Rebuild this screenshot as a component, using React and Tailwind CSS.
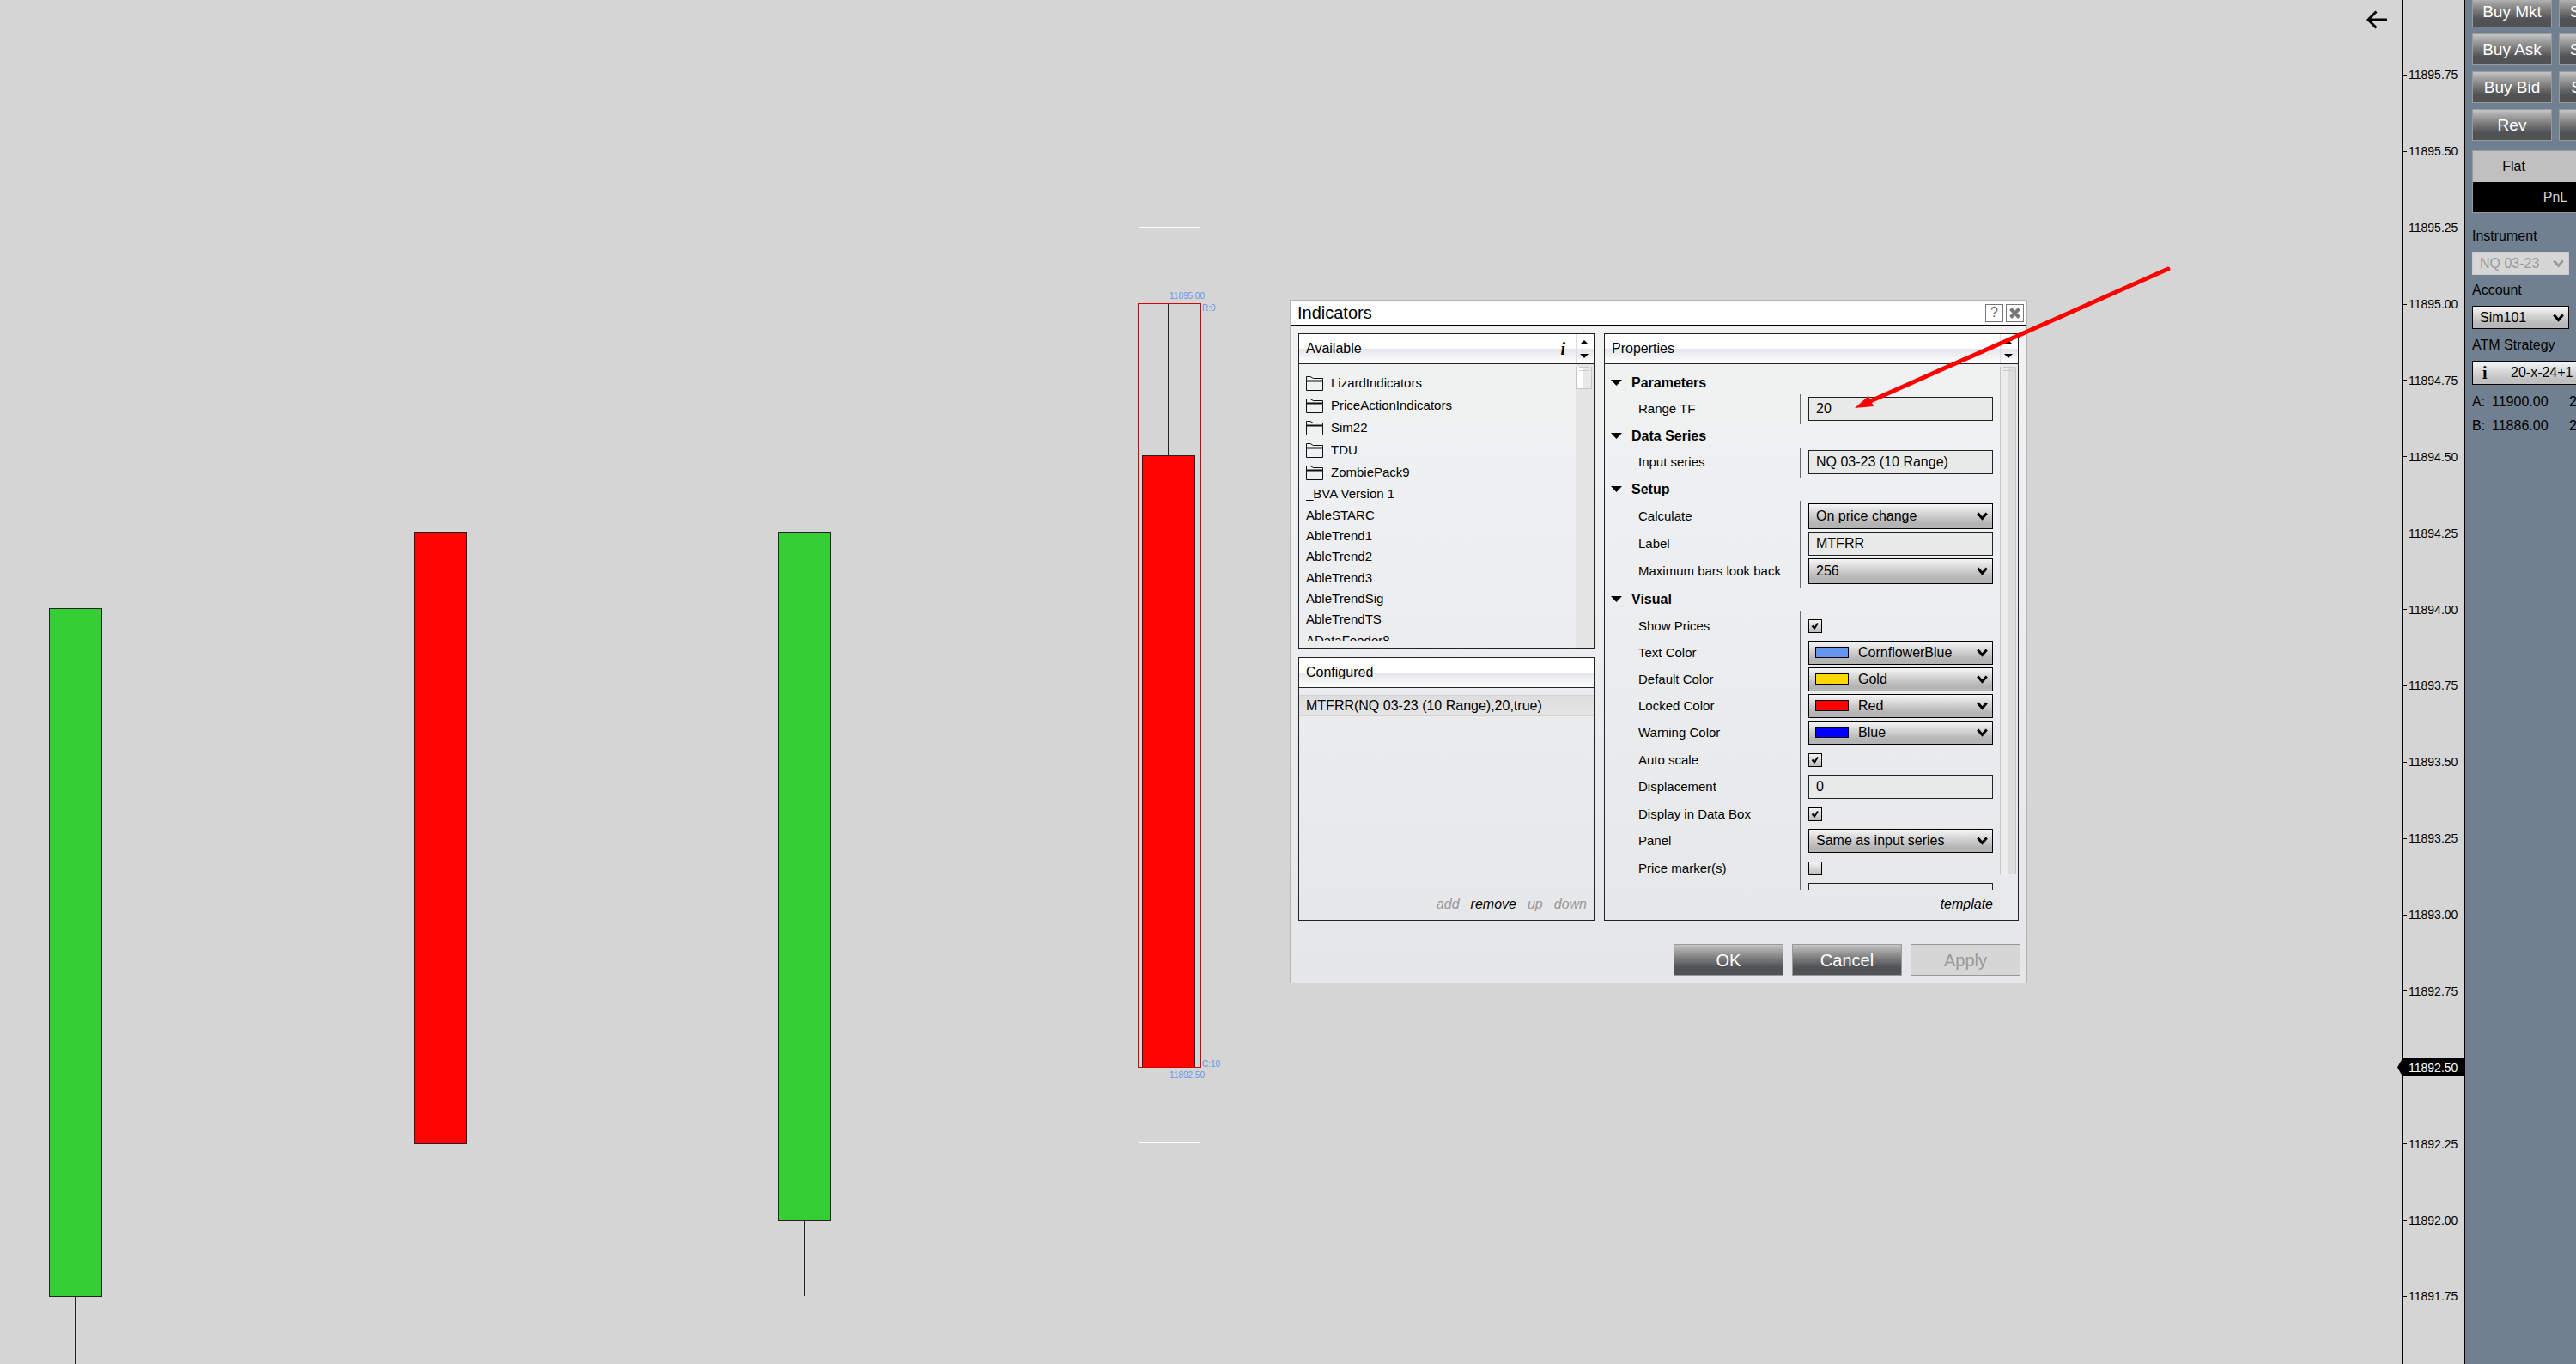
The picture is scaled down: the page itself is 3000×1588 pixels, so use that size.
import React from 'react';

const TICKS = [
    '11895.75', '11895.50', '11895.25', '11895.00', '11894.75', '11894.50',
    '11894.25', '11894.00', '11893.75', '11893.50', '11893.25', '11893.00',
    '11892.75', '11892.50', '11892.25', '11892.00', '11891.75',
];
const LAST_PRICE = '11892.50';

const CANDLES = [
    { x: 57, top: 708, bottom: 1509, wick: [1509, 1600], fill: '#35cf35' },
    { x: 482, top: 619, bottom: 1331, wick: [443, 619], fill: '#ff0303' },
    { x: 906, top: 619, bottom: 1420, wick: [1420, 1509], fill: '#35cf35' },
    { x: 1330, top: 530, bottom: 1242, wick: [353, 530], fill: '#ff0303' },
];

const FOLDERS = ['LizardIndicators', 'PriceActionIndicators', 'Sim22', 'TDU', 'ZombiePack9'];
const INDICATORS = [
    '_BVA Version 1', 'AbleSTARC', 'AbleTrend1', 'AbleTrend2',
    'AbleTrend3', 'AbleTrendSig', 'AbleTrendTS', 'ADataFeeder8',
];

const SECTIONS = [
    { title: 'Parameters', rows: [{ label: 'Range TF', type: 'text', value: '20' }] },
    { title: 'Data Series', rows: [{ label: 'Input series', type: 'text', value: 'NQ 03-23 (10 Range)' }] },
    {
        title: 'Setup',
        rows: [
            { label: 'Calculate', type: 'select', value: 'On price change', tall: true },
            { label: 'Label', type: 'text', value: 'MTFRR' },
            { label: 'Maximum bars look back', type: 'select', value: '256', tall: true },
        ],
    },
    {
        title: 'Visual',
        rows: [
            { label: 'Show Prices', type: 'check', value: true },
            { label: 'Text Color', type: 'select', value: 'CornflowerBlue', swatch: 'bg-[#6495ed]' },
            { label: 'Default Color', type: 'select', value: 'Gold', swatch: 'bg-[#ffd700]' },
            { label: 'Locked Color', type: 'select', value: 'Red', swatch: 'bg-[#ff0000]' },
            { label: 'Warning Color', type: 'select', value: 'Blue', swatch: 'bg-[#0000ff]' },
            { label: 'Auto scale', type: 'check', value: true },
            { label: 'Displacement', type: 'text', value: '0' },
            { label: 'Display in Data Box', type: 'check', value: true },
            { label: 'Panel', type: 'select', value: 'Same as input series' },
            { label: 'Price marker(s)', type: 'check', value: false },
            { label: '', type: 'text', value: '' },
        ],
    },
];

const ORDER_BUTTONS = ['Buy Mkt', 'Sell Mkt', 'Buy Ask', 'Sell Ask', 'Buy Bid', 'Sell Bid', 'Rev', 'Close'];

const DARK_BUTTON = 'border border-[#9a9a9a] bg-linear-to-b from-[#c4c4c4] via-[#7c7c7c] via-45% to-[#505254] to-75% text-white';

const Chevron = ({ className = 'text-black' }) => (
    <svg className={`absolute right-[6px] top-1/2 -translate-y-1/2 pointer-events-none ${className}`} width="13" height="10" viewBox="0 0 13 10">
        <path d="M1.3 1.5 L6.5 7.5 L11.7 1.5" fill="none" stroke="currentColor" strokeWidth="3" />
    </svg>
);

const FolderIcon = () => (
    <svg width="20" height="17" viewBox="0 0 20 17" fill="none" stroke="#111" strokeWidth="1">
        <path d="M0.5 16.5 V0.5 H5 L8.5 2.5 H19.5 V16.5 Z" />
        <path d="M1 5.5 H19" strokeWidth="2" />
    </svg>
);

const Spinner = () => (
    <div className="w-[21px] h-full flex flex-col items-center justify-center gap-[11px] pr-[2px] border-l border-[#dcdfe2]">
        <svg width="10" height="5" viewBox="0 0 10 5"><path d="M0 5 L5 0 L10 5 Z" /></svg>
        <svg width="10" height="5" viewBox="0 0 10 5"><path d="M0 0 L5 5 L10 0 Z" /></svg>
    </div>
);

const PanelHeader = ({ title, children }) => (
    <div className="h-[35px] shrink-0 flex items-center pl-2 border-b border-[#222] bg-linear-to-b from-white from-50% via-[#e2e5e9] via-50% to-white">
        <h2 className="flex-1">{title}</h2>
        {children}
    </div>
);

const Grip = () => (
    <div className="mx-auto mt-[3px] w-[11px] h-[5px] border-y border-[#c9c9c9]" />
);

const Field = ({ id, row }) => {
    if (row.type === 'check') {
        return (
            <span className="relative flex w-4 h-4">
                <input id={id} type="checkbox" defaultChecked={row.value} className="peer appearance-none w-4 h-4 border border-black bg-linear-to-b from-[#f4f4f4] to-[#bcbcbc]" />
                <svg className="hidden peer-checked:block absolute inset-0 pointer-events-none" width="16" height="16" viewBox="0 0 16 16">
                    <path d="M4.5 7.5 L7 10.5 L11 4.5" fill="none" stroke="#000" strokeWidth="2" />
                </svg>
            </span>
        );
    }
    if (row.type === 'select') {
        return (
            <span className="relative block">
                <select
                    id={id}
                    className={`block appearance-none w-full border border-black bg-linear-to-b from-[#f6f6f6] to-[#b4b4b4] to-80% ${row.tall ? 'h-[30px]' : 'h-7'} ${row.swatch ? 'pl-[57px]' : 'pl-2'}`}
                >
                    <option>{row.value}</option>
                </select>
                {row.swatch && (
                    <span className={`absolute left-2 top-[7px] w-[39px] h-[13px] border border-black pointer-events-none ${row.swatch}`} />
                )}
                <Chevron />
            </span>
        );
    }
    return (
        <input
            id={id}
            type="text"
            defaultValue={row.value}
            aria-label={row.label ? undefined : 'Value'}
            className="block w-full h-7 border border-[#222] bg-[#e8e9e9] pl-2"
        />
    );
};

const Section = ({ section }) => (
    <section>
        <h3 className="h-[27px] flex items-center gap-[11px] pl-[7px] font-bold">
            <svg width="13" height="7" viewBox="0 0 13 7"><path d="M0 0 H13 L6.5 7 Z" /></svg>
            {section.title}
        </h3>
        <div className="grid grid-cols-[1fr_223px] gap-y-[3px] pt-[3px] pb-1 pl-[39px] relative">
            <div className="absolute inset-y-0 right-[223px] w-[2px] bg-[#6a6a6a]" />
            {section.rows.map((row, idx) => {
                const id = `${section.title}-${idx}`;
                return (
                    <React.Fragment key={id}>
                        <label htmlFor={id} className="flex items-center whitespace-nowrap text-[15px]">{row.label}</label>
                        <div className={`pl-2 flex flex-col justify-center ${row.type === 'check' ? 'h-[29px]' : ''}`}>
                            <Field id={id} row={row} />
                        </div>
                    </React.Fragment>
                );
            })}
        </div>
    </section>
);

const IndicatorsDialog = () => (
    <div role="dialog" aria-label="Indicators" className="absolute left-[1502px] top-[349px] w-[859px] border border-[#b4b4b4] bg-linear-to-b from-[#f1f3f3] via-[#ecedef] to-[#e5e6e8] text-base leading-5">
        <div className="h-[29px] flex items-center gap-[3px] pl-2 pr-[3px] bg-white border-b border-black">
            <h1 className="flex-1 text-xl leading-6">Indicators</h1>
            <button aria-label="Help" className="w-[21px] h-[21px] flex items-center justify-center border border-[#777] text-[#666] text-base leading-4">?</button>
            <button aria-label="Close" className="w-[21px] h-[21px] flex items-center justify-center border border-[#777]">
                <svg width="13" height="13" viewBox="0 0 13 13">
                    <path d="M1.5 1.5 L11.5 11.5 M11.5 1.5 L1.5 11.5" stroke="#777" strokeWidth="4" />
                </svg>
            </button>
        </div>

        <div className="grid grid-cols-[345px_1fr] gap-x-[11px] px-[9px] pt-[9px]">
            <div className="flex flex-col gap-[10px]">
                <div className="border border-[#222]">
                    <PanelHeader title="Available">
                        <button aria-label="Info" className="mr-3 font-['Liberation_Serif',serif] italic font-bold text-xl">i</button>
                        <Spinner />
                    </PanelHeader>
                    <div className="flex h-[330px]">
                        <div className="flex-1 pl-2 pt-[9px] pb-2">
                            <div className="h-full overflow-hidden text-[15px]">
                                <ul>
                                    {FOLDERS.map((name) => (
                                        <li key={name} className="h-[26px] flex items-center gap-[9px]">
                                            <FolderIcon />
                                            {name}
                                        </li>
                                    ))}
                                </ul>
                                <ul className="grid h-[195px]">
                                    {INDICATORS.map((name) => (
                                        <li key={name} className="flex items-center">{name}</li>
                                    ))}
                                </ul>
                            </div>
                        </div>
                        <div className="w-[21px] bg-[#e5e5e6]">
                            <div className="h-[26px] w-[19px] border border-t-0 border-[#c6c6c6] bg-linear-to-r from-white from-50% to-[#e8e8e8] to-50%">
                                <Grip />
                            </div>
                        </div>
                    </div>
                </div>

                <div className="border border-[#222]">
                    <PanelHeader title="Configured" />
                    <div className="h-[270px] flex flex-col pt-2">
                        <div className="h-[25px] flex items-center pl-2 border-y border-[#d2d2d2] bg-linear-to-b from-[#dedddd] to-[#e6e5e5]">
                            MTFRR(NQ 03-23 (10 Range),20,true)
                        </div>
                        <div className="mt-auto flex justify-end gap-[13px] pr-2 pb-2 italic text-[#999]">
                            <button disabled>add</button>
                            <button className="text-black">remove</button>
                            <button disabled>up</button>
                            <button disabled>down</button>
                        </div>
                    </div>
                </div>
            </div>

            <div className="border border-[#222] flex flex-col">
                <PanelHeader title="Properties">
                    <Spinner />
                </PanelHeader>
                <div className="flex flex-1">
                    <div className="flex-1 flex flex-col pr-2">
                        <div className="h-[612px] overflow-hidden pt-2">
                            {SECTIONS.map((section) => (
                                <Section key={section.title} section={section} />
                            ))}
                        </div>
                        <button className="mt-auto mb-2 self-end italic">template</button>
                    </div>
                    <div className="w-[21px] bg-[#e9eaeb]">
                        <div className="h-[591px] w-[19px] border border-t-0 border-[#c6c6c6] bg-linear-to-r from-[#ececec] from-50% to-[#dcdcdc] to-50%">
                            <Grip />
                        </div>
                    </div>
                </div>
            </div>
        </div>

        <div className="flex justify-end gap-[10px] pt-[27px] pb-2 pr-[7px] text-xl">
            <button className={`w-32 h-[37px] ${DARK_BUTTON}`}>OK</button>
            <button className={`w-32 h-[37px] ${DARK_BUTTON}`}>Cancel</button>
            <button disabled className="w-32 h-[37px] border border-[#999] bg-[#d6d6d6] text-[#999]">Apply</button>
        </div>
    </div>
);

const Chart = () => (
    <svg className="absolute inset-0 w-full h-full">
        {CANDLES.map((c) => (
            <g key={c.x} stroke="#222" strokeWidth="1">
                <path d={`M${c.x + 30}.5 ${c.wick[0]} V${c.wick[1]}`} />
                <rect x={c.x + 0.5} y={c.top + 0.5} width="61" height={c.bottom - c.top} fill={c.fill} />
            </g>
        ))}
        {/* projected range of the current bar */}
        <path d="M1326 264.5 H1398 M1326 1330.5 H1398" stroke="#fff" />
        <rect x="1325.5" y="353.5" width="73" height="889" fill="none" stroke="#d80000" />
        <g fill="#6495ed" className="text-[10px]">
            <text x="1362" y="348">11895.00</text>
            <text x="1400" y="362">R:0</text>
            <text x="1400" y="1242">C:10</text>
            <text x="1362" y="1255">11892.50</text>
        </g>
    </svg>
);

const PriceAxis = () => (
    <div className="w-[73px] shrink-0 flex flex-col border-l border-black pt-[43px] pb-[34px] text-sm leading-5">
        {TICKS.map((price) => (
            <div key={price} className="flex-1 flex items-center">
                {price === LAST_PRICE ? (
                    <div className="relative h-[21px] w-[71px] flex items-center pl-[7px] bg-black text-white">
                        <svg className="absolute right-full top-0" width="6" height="21" viewBox="0 0 6 21">
                            <path d="M6 0 L0 10.5 L6 21 Z" />
                        </svg>
                        {price}
                    </div>
                ) : (
                    <>
                        <span className="w-[5px] h-px bg-black mr-[2px]" />
                        {price}
                    </>
                )}
            </div>
        ))}
    </div>
);

const TraderPanel = () => (
    <aside className="w-[130px] shrink-0 overflow-hidden border-l border-black bg-[#708090] pl-2 text-base leading-5">
        <div className="w-[194px] -mt-[5px]">
            <div className="grid grid-cols-2 gap-x-2 gap-y-[7px] text-[19px]">
                {ORDER_BUTTONS.map((name) => (
                    <button key={name} className={`h-[37px] ${DARK_BUTTON}`}>{name}</button>
                ))}
            </div>

            <div className="mt-[11px] border border-[#999]">
                <div className="grid grid-cols-2 h-9 bg-[#c0c0c0]">
                    <div className="flex items-center justify-center border-r border-[#aaa]">Flat</div>
                </div>
                <div className="h-[35px] flex items-center justify-center bg-black text-[#d3d3d3]">PnL</div>
            </div>

            <label htmlFor="instrument" className="block mt-[17px] mb-2">Instrument</label>
            <div className="relative w-[113px]">
                <select id="instrument" disabled className="block appearance-none w-full h-[27px] pl-2 border border-[#ccc] bg-[#d6d6d6] text-[#999] opacity-100">
                    <option>NQ 03-23</option>
                </select>
                <Chevron className="text-[#999]" />
            </div>

            <label htmlFor="account" className="block mt-2 mb-2">Account</label>
            <div className="relative w-[113px]">
                <select id="account" className="block appearance-none w-full h-[27px] pl-2 border border-black bg-linear-to-b from-[#f6f6f6] to-[#b8b8b8] to-80%">
                    <option>Sim101</option>
                </select>
                <Chevron />
            </div>

            <label htmlFor="atm" className="block mt-[9px] mb-2">ATM Strategy</label>
            <div className="relative">
                <select id="atm" className="block appearance-none w-full h-7 pl-11 border border-black bg-linear-to-b from-[#f6f6f6] to-[#c0c0c0] to-80%">
                    <option>20-x-24+1</option>
                </select>
                <span className="absolute left-3 top-1 font-['Liberation_Serif',serif] font-bold text-xl leading-5 pointer-events-none">i</span>
            </div>

            <div className="grid grid-cols-[23px_90px_1fr] gap-y-2 mt-[10px]">
                <span>A:</span><span>11900.00</span><span>2</span>
                <span>B:</span><span>11886.00</span><span>2</span>
            </div>
        </div>
    </aside>
);

export default function App() {
    return (
        <div className="flex h-screen overflow-hidden bg-[#d5d5d5] text-black font-['Liberation_Sans',Arial,sans-serif]">
            <main className="relative flex-1">
                <Chart />
                <button aria-label="Back" className="absolute right-[17px] top-3">
                    <svg width="24" height="22" viewBox="0 0 24 22" fill="none" stroke="#000" strokeWidth="3">
                        <path d="M24 11 H2 M11.5 1.5 L2 11 L11.5 20.5" />
                    </svg>
                </button>
                <IndicatorsDialog />
                {/* callout arrow pointing at the Range TF field */}
                <svg className="absolute inset-0 w-full h-full pointer-events-none">
                    <path d="M2525 313 L2176 468" stroke="#ff0000" strokeWidth="5" strokeLinecap="round" />
                    <path d="M2160 475 L2176 461 L2182 473 Z" fill="#ff0000" />
                </svg>
            </main>
            <PriceAxis />
            <TraderPanel />
        </div>
    );
}
